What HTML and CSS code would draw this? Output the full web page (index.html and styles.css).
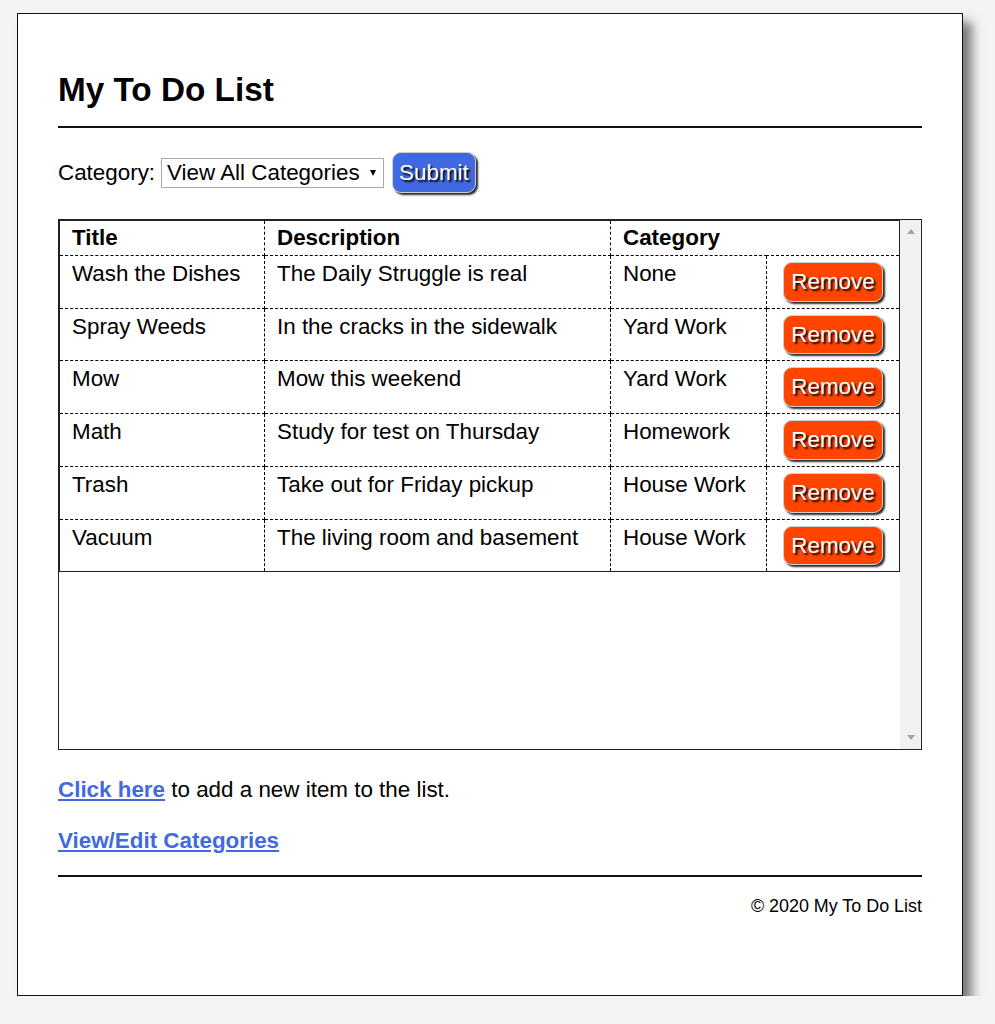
FILE: index.html
```html
<!DOCTYPE html>
<html lang="en">
<head>
<meta charset="utf-8">
<title>My To Do List</title>
<link rel="stylesheet" href="styles.css">
</head>
<body>
<div class="page">
  <h1 class="title">My To Do List</h1>
  <form class="filter">
    <label class="filter-label">Category:</label>
    <span class="select-wrap">
      <select class="select">
        <option>View All Categories</option>
      </select>
    </span>
    <button type="button" class="btn btn-submit">Submit</button>
  </form>
  <div class="scroll-box">
    <div class="table-area">
      <table class="todo">
        <colgroup>
          <col class="c-title">
          <col class="c-desc">
          <col class="c-cat">
          <col class="c-btn">
        </colgroup>
        <thead>
          <tr><th>Title</th><th>Description</th><th colspan="2">Category</th></tr>
        </thead>
        <tbody>
          <tr><td>Wash the Dishes</td><td>The Daily Struggle is real</td><td>None</td><td class="act"><button type="button" class="btn btn-remove">Remove</button></td></tr>
          <tr><td>Spray Weeds</td><td>In the cracks in the sidewalk</td><td>Yard Work</td><td class="act"><button type="button" class="btn btn-remove">Remove</button></td></tr>
          <tr><td>Mow</td><td>Mow this weekend</td><td>Yard Work</td><td class="act"><button type="button" class="btn btn-remove">Remove</button></td></tr>
          <tr><td>Math</td><td>Study for test on Thursday</td><td>Homework</td><td class="act"><button type="button" class="btn btn-remove">Remove</button></td></tr>
          <tr><td>Trash</td><td>Take out for Friday pickup</td><td>House Work</td><td class="act"><button type="button" class="btn btn-remove">Remove</button></td></tr>
          <tr><td>Vacuum</td><td>The living room and basement</td><td>House Work</td><td class="act"><button type="button" class="btn btn-remove">Remove</button></td></tr>
        </tbody>
      </table>
    </div>
    <div class="scrollbar">
      <span class="arrow arrow-up"></span>
      <span class="arrow arrow-down"></span>
    </div>
  </div>
  <p class="link-line"><a href="#" class="link">Click here</a> to add a new item to the list.</p>
  <p class="link-line second"><a href="#" class="link">View/Edit Categories</a></p>
  <footer class="footer">
    <p class="copy">&copy; 2020 My To Do List</p>
  </footer>
</div>
</body>
</html>
```

FILE: styles.css
```css
html, body {
  margin: 0;
  padding: 0;
  background: #f4f4f4;
}

body {
  font-family: "Liberation Sans", Arial, sans-serif;
  font-size: 22.4px;
  line-height: 25.76px;
  color: #000;
}

.page {
  margin: 13px 0 0 17px;
  width: 864px;
  padding: 35px 40px 40px;
  background: #fff;
  border: 1px solid #111;
  box-shadow: 9px 9px 10px #7a7a7a;
}

.title {
  margin: 22px 0 0;
  font-size: 33.3px;
  line-height: 38px;
  font-weight: bold;
  padding-bottom: 17px;
  border-bottom: 2px solid #111;
}

.filter {
  margin: 24px 0 0;
  display: flex;
  align-items: center;
  height: 41px;
}

.filter-label {
  margin-right: 6px;
}

.select-wrap {
  position: relative;
  display: inline-block;
  margin-right: 8px;
}

.select {
  -webkit-appearance: none;
  appearance: none;
  font-family: "Liberation Sans", Arial, sans-serif;
  font-size: 22.4px;
  line-height: 25px;
  height: 30px;
  width: 223px;
  padding: 1px 5px;
  border: 1px solid #a9a9a9;
  border-radius: 0;
  background: #fff;
  color: #000;
  box-sizing: border-box;
}

.select-wrap::after {
  content: "";
  position: absolute;
  right: 8px;
  top: 12px;
  width: 0;
  height: 0;
  border-left: 3.5px solid transparent;
  border-right: 3.5px solid transparent;
  border-top: 6px solid #000;
  pointer-events: none;
}

.btn {
  font-family: "Liberation Sans", Arial, sans-serif;
  font-size: 22.4px;
  line-height: 25.76px;
  color: #fff;
  border: 1px solid #cfcfcf;
  border-radius: 9px;
  padding: 7px 7px;
  text-shadow: 2px 2px 2px #000;
  box-shadow: 2px 2px 2px #2a2a2a;
  cursor: pointer;
}

.btn-submit {
  background: #4169e1;
  padding: 6.5px 6px;
}

.btn-remove {
  background: #ff4500;
  padding: 6px 7px;
}

.scroll-box {
  margin-top: 26px;
  height: 531px;
  box-sizing: border-box;
  border: 1px solid #222;
  display: flex;
}

.table-area {
  flex: 1;
}

.scrollbar {
  width: 21px;
  background: #f1f1f1;
  display: flex;
  flex-direction: column;
  justify-content: space-between;
  align-items: center;
  padding: 9px 0 9px;
}

.arrow {
  width: 0;
  height: 0;
  border-left: 4px solid transparent;
  border-right: 4px solid transparent;
}

.arrow-up {
  border-bottom: 5px solid #a3a3a3;
}

.arrow-down {
  border-top: 5px solid #a3a3a3;
}

.todo {
  width: 100%;
  border-collapse: collapse;
  table-layout: fixed;
  border: 1px solid #222;
}

.c-title { width: 205px; }
.c-desc { width: 346px; }
.c-cat { width: 156px; }
.c-btn { width: 133px; }

.todo th,
.todo td {
  border: 1px dashed #000;
  padding: 5px 12px;
  text-align: left;
  vertical-align: top;
  font-size: 22.4px;
  line-height: 25.76px;
}

.todo th {
  font-weight: bold;
  padding: 4px 12px;
}

.todo td.act {
  text-align: center;
  padding: 6px 12px;
}

.link-line {
  margin: 27px 0 0;
}

.link-line.second {
  margin-top: 25px;
}

.link {
  color: #4169e1;
  font-weight: bold;
  text-decoration: underline;
}

.footer {
  margin-top: 21px;
  border-top: 2px solid #111;
}

.copy {
  margin: 19px 0 39px;
  text-align: right;
  font-size: 17.92px;
  line-height: 20.6px;
}
```
